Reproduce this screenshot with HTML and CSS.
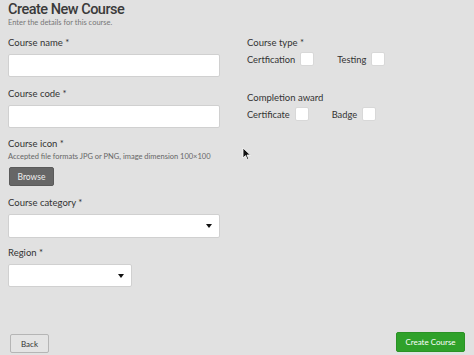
FILE: index.html
```html
<!DOCTYPE html>
<html>
<head>
<meta charset="utf-8">
<link rel="stylesheet" href="styles.css">
</head>
<body>
<div class="page">
  <header class="head">
    <h1 class="title">Create New Course</h1>
    <p class="subtitle">Enter the details for this course.</p>
  </header>
  <div class="form">
    <div class="col-left">
      <div class="field">
        <label class="label">Course name *</label>
        <div class="input"></div>
      </div>
      <div class="field">
        <label class="label">Course code *</label>
        <div class="input"></div>
      </div>
      <div class="field icon-field">
        <label class="label">Course icon *</label>
        <div class="hint">Accepted file formats JPG or PNG, image dimension 100×100</div>
        <button class="browse">Browse</button>
      </div>
      <div class="field cat-field">
        <label class="label">Course category *</label>
        <div class="input select tall"><span class="caret"></span></div>
      </div>
      <div class="field">
        <label class="label">Region *</label>
        <div class="input select small"><span class="caret"></span></div>
      </div>
    </div>
    <div class="col-right">
      <div class="group">
        <div class="label">Course type *</div>
        <div class="checks">
          <span class="check">Certfication <span class="box"></span></span>
          <span class="check">Testing <span class="box"></span></span>
        </div>
      </div>
      <div class="group">
        <div class="label">Completion award</div>
        <div class="checks">
          <span class="check">Certificate <span class="box"></span></span>
          <span class="check">Badge <span class="box"></span></span>
        </div>
      </div>
    </div>
  </div>
  <footer class="foot">
    <button class="back">Back</button>
    <button class="create">Create Course</button>
  </footer>
  <svg class="cursor" width="10" height="14" viewBox="0 0 10 14"><path d="M1 1 L1 11 L3.5 8.6 L5.4 12.6 L6.8 12 L5 8 L8.4 8 Z" fill="#111" stroke="#fff" stroke-width="0.8"/></svg>
</div>
</body>
</html>
```

FILE: styles.css
```css
* { box-sizing: border-box; }
html, body { margin: 0; padding: 0; }
body {
  background: #e1e1e1;
  font-family: Lato, "Open Sans", sans-serif;
  color: #333;
  width: 474px;
  height: 355px;
  overflow: hidden;
}
.page {
  position: relative;
  height: 355px;
  padding: 1px 8px 0 8px;
  display: flex;
  flex-direction: column;
}
.title {
  margin: 0;
  font-family: Roboto, sans-serif;
  font-size: 14.5px;
  font-weight: 500;
  line-height: 17px;
  color: #3a3a3a;
  letter-spacing: -0.5px;
}
.subtitle {
  margin: 0;
  font-size: 7.5px;
  line-height: 9px;
  color: #777;
}
.form {
  display: grid;
  grid-template-columns: 212px 1fr;
  column-gap: 27px;
  margin-top: 10px;
}
.field { margin-bottom: 10px; }
.field:first-child { margin-bottom: 11px; }
.icon-field { margin-bottom: 11px; }
.cat-field { margin-bottom: 9px; }
.label {
  display: block;
  font-size: 9.5px;
  line-height: 12px;
  color: #333;
  margin-bottom: 5px;
}
.input {
  height: 23px;
  background: #fff;
  border: 1px solid #d0d0d0;
  border-radius: 2px;
  position: relative;
}
.tall { height: 24px; }
.select .caret {
  position: absolute;
  right: 7px;
  top: 9px;
  width: 0; height: 0;
  border-left: 3px solid transparent;
  border-right: 3px solid transparent;
  border-top: 4px solid #111;
}
.small { width: 124px; }
.hint {
  font-size: 7.5px;
  line-height: 10px;
  color: #666;
  margin-top: -3px;
  margin-bottom: 5px;
  white-space: nowrap;
}
.browse {
  display: block;
  margin-left: 1px;
  width: 45px;
  height: 19px;
  background: #666;
  color: #eee;
  border: 1px solid #5a5a5a;
  border-radius: 2px;
  font-family: inherit;
  font-size: 8.5px;
  padding: 0;
}
.group { margin-bottom: 26px; }
.col-right .label { margin-bottom: 3px; }
.checks { display: flex; gap: 23px; }
.check {
  display: flex;
  align-items: center;
  gap: 5px;
  font-size: 9.3px;
  color: #333;
}
.box {
  display: inline-block;
  width: 14px; height: 14px;
  background: #fff;
  border: 1px solid #d8d8d8;
  border-radius: 2px;
}
.foot {
  margin-top: auto;
  display: flex;
  justify-content: space-between;
  align-items: flex-end;
  padding: 0 1px 2px 2px;
}
.back {
  width: 39px; height: 19px;
  background: #e4e4e4;
  border: 1px solid #b5b5b5;
  border-radius: 2px;
  font-family: inherit;
  font-size: 8px;
  color: #333;
  padding: 0;
}
.create {
  width: 69px; height: 20px;
  background: #2fa12a;
  border: 1px solid #2a9225;
  border-radius: 2px;
  color: #fff;
  font-family: inherit;
  font-size: 8px;
  padding: 0;
  margin-bottom: 1px;
}
.cursor { position: absolute; left: 242px; top: 147px; }
```
